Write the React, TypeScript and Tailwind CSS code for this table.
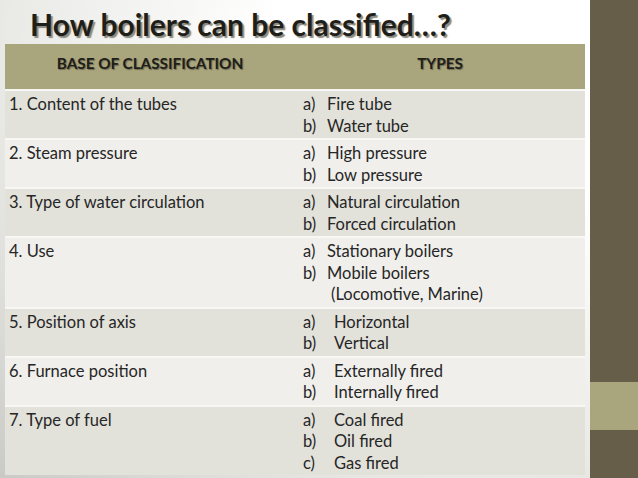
import React from "react";

type Row = {
    base: string;
    types: { tag: string; text: string }[];
    extra?: string;
    wide?: boolean;
};

const rows: Row[] = [
    { base: "1. Content of the tubes", types: [{ tag: "a)", text: "Fire tube" }, { tag: "b)", text: "Water tube" }] },
    { base: "2. Steam pressure", types: [{ tag: "a)", text: "High pressure" }, { tag: "b)", text: "Low pressure" }] },
    { base: "3. Type of water circulation", types: [{ tag: "a)", text: "Natural circulation" }, { tag: "b)", text: "Forced circulation" }] },
    {
        base: "4. Use",
        types: [{ tag: "a)", text: "Stationary boilers" }, { tag: "b)", text: "Mobile boilers" }],
        extra: "(Locomotive, Marine)",
    },
    { base: "5. Position of axis", types: [{ tag: "a)", text: "Horizontal" }, { tag: "b)", text: "Vertical" }], wide: true },
    { base: "6. Furnace position", types: [{ tag: "a)", text: "Externally fired" }, { tag: "b)", text: "Internally fired" }], wide: true },
    {
        base: "7. Type of fuel",
        types: [{ tag: "a)", text: "Coal fired" }, { tag: "b)", text: "Oil fired" }, { tag: "c)", text: "Gas fired" }],
        wide: true,
    },
];

export default function App() {
    return (
        <div
            className="w-[638px] h-[478px] overflow-hidden flex bg-[radial-gradient(ellipse_at_75%_10%,#ffffff_30%,#e9e9e6_70%,#c9c9c6_100%)] text-[#262626]"
            style={{ fontFamily: "Lato, 'Open Sans', sans-serif" }}
        >
            <div className="flex-1 flex flex-col">
                <div className="h-[44px] shrink-0 pl-[30px] pt-[6px]">
                    <h1 className="text-[30px] font-bold leading-[36px] text-[#1e1e1a] [text-shadow:2px_2px_1px_#8a8a80]">
                        How boilers can be classified…?
                    </h1>
                </div>

                <div className="ml-[5px] w-[580px] flex flex-col">
                    <div className="grid grid-cols-[290px_290px] h-[45px] shrink-0 bg-[#a9a67e] pt-[8px] text-[15.3px] font-bold text-[#1e1e1a] [text-shadow:1px_1px_1px_#6d6a50]">
                        <div className="text-center">BASE OF CLASSIFICATION</div>
                        <div className="text-center">TYPES</div>
                    </div>

                    {rows.map((r, i) => (
                        <div
                            key={r.base}
                            className={`grid grid-cols-[290px_290px] border-t-[2px] border-[#f7f7f4] pt-[3px] pb-[1px] text-[16.5px] leading-[21.5px] ${
                                i % 2 === 0 ? "bg-[#e2e1da]" : "bg-[#f0efeb]"
                            }`}
                        >
                            <div className="pl-[4px]">{r.base}</div>
                            <div className="pl-[8px]">
                                {r.types.map((t) => (
                                    <div key={t.tag} className="flex">
                                        <span className={r.wide ? "w-[31px]" : "w-[24px]"}>{t.tag}</span>
                                        <span>{t.text}</span>
                                    </div>
                                ))}
                                {r.extra && <div className="pl-[28px]">{r.extra}</div>}
                            </div>
                        </div>
                    ))}
                </div>
            </div>

            <div className="w-[48px] flex flex-col">
                <div className="h-[382px] bg-[#665e48]" />
                <div className="h-[48px] bg-[#a9a67e]" />
                <div className="flex-1 bg-[#665e48]" />
            </div>
        </div>
    );
}
